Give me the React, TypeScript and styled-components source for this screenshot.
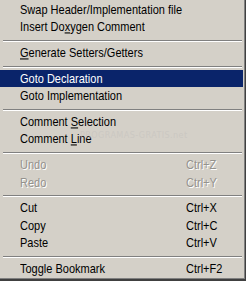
import React from 'react';
import styled, { createGlobalStyle } from 'styled-components';

const GlobalStyle = createGlobalStyle`
  html, body {
    margin: 0;
    padding: 0;
    background: #d4d0c8;
  }
`;

const Menu = styled.div`
  position: relative;
  width: 246px;
  height: 281px;
  box-sizing: border-box;
  padding: 1px 2px 0 0;
  background: #d4d0c8;
  border-right: 1px solid #404040;
  border-bottom: 2px solid #404040;
  box-shadow: inset -1px -1px 0 #808080;
  font-family: 'Liberation Sans', Arial, sans-serif;
  font-size: 11px;
  color: #000;
  overflow: hidden;
`;

const Item = styled.div<{ $active?: boolean; $disabled?: boolean }>`
  display: grid;
  grid-template-columns: 166px 1fr;
  align-items: center;
  height: 17.5px;
  padding-left: 20px;
  white-space: nowrap;
  background: ${({ $active }) => ($active ? '#0a246a' : 'transparent')};
  color: ${({ $active, $disabled }) =>
    $active ? '#fff' : $disabled ? '#94928d' : '#000'};
  text-shadow: ${({ $disabled }) => ($disabled ? '1px 1px 0 #fff' : 'none')};
`;

const Label = styled.span`
  transform: scaleY(1.08);
`;

const Shortcut = styled.span`
  transform: scaleY(1.08);
`;

const Separator = styled.div`
  height: 8.2px;
  box-sizing: border-box;
  padding: 4px 1px 0 3px;

  &::before {
    content: '';
    display: block;
    height: 1px;
    background: #808080;
    border-bottom: 1px solid #fff;
  }
`;

const Watermark = styled.div`
  position: absolute;
  left: 80px;
  top: 130px;
  font-family: 'DejaVu Sans Condensed', 'DejaVu Sans', sans-serif;
  font-size: 9px;
  letter-spacing: 0.4px;
  color: rgba(196, 194, 190, 0.6);
  pointer-events: none;
`;

type Entry =
  | { sep: true }
  | { label: React.ReactNode; key?: string; active?: boolean; disabled?: boolean };

const entries: Entry[] = [
  { label: 'Swap Header/Implementation file' },
  { label: <>Insert Do<u>x</u>ygen Comment</> },
  { sep: true },
  { label: <><u>G</u>enerate Setters/Getters</> },
  { sep: true },
  { label: 'Goto Declaration', active: true },
  { label: 'Goto Implementation' },
  { sep: true },
  { label: <>Comment <u>S</u>election</> },
  { label: <>Comment <u>L</u>ine</> },
  { sep: true },
  { label: 'Undo', key: 'Ctrl+Z', disabled: true },
  { label: 'Redo', key: 'Ctrl+Y', disabled: true },
  { sep: true },
  { label: 'Cut', key: 'Ctrl+X' },
  { label: 'Copy', key: 'Ctrl+C' },
  { label: 'Paste', key: 'Ctrl+V' },
  { sep: true },
  { label: 'Toggle Bookmark', key: 'Ctrl+F2' },
];

const App: React.FC = () => {
  return (
    <>
      <GlobalStyle />
      <Menu>
        {entries.map((e, i) =>
          'sep' in e ? (
            <Separator key={i} />
          ) : (
            <Item key={i} $active={e.active} $disabled={e.disabled}>
              <Label>{e.label}</Label>
              <Shortcut>{e.key}</Shortcut>
            </Item>
          )
        )}
        <Watermark>PROGRAMAS-GRATIS.net</Watermark>
      </Menu>
    </>
  );
};

export default App;
